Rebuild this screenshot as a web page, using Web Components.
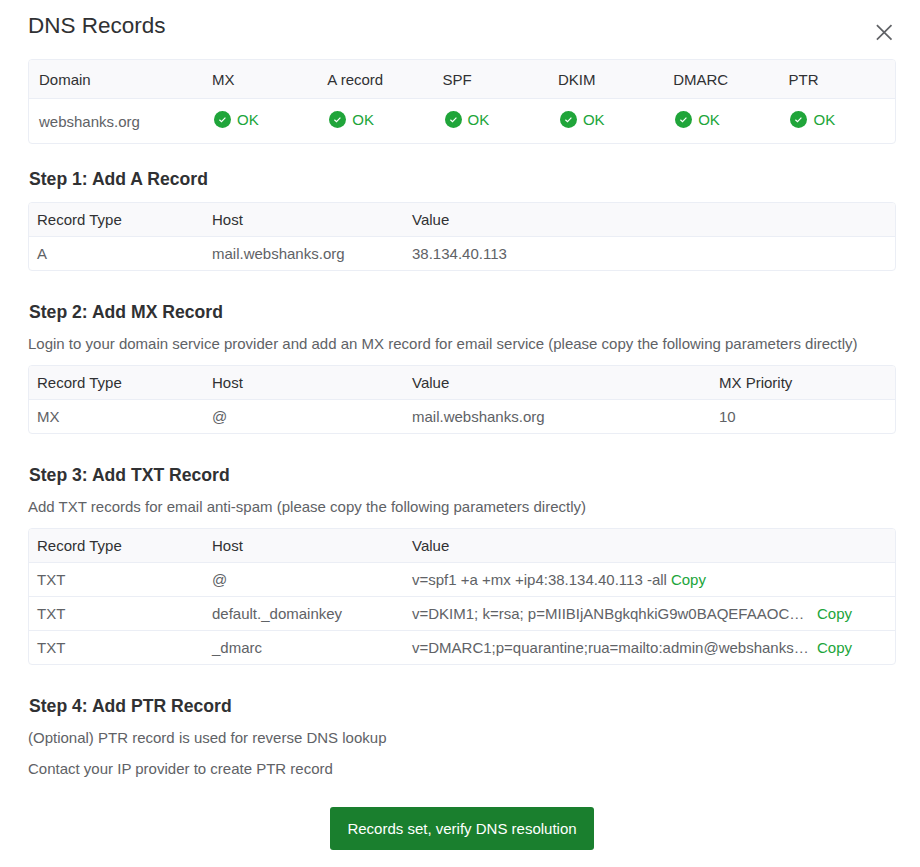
<!DOCTYPE html>
<html>
<head>
<meta charset="utf-8">
<title>DNS Records</title>
<style>
  html, body { margin: 0; background: #fff; }
  body { font-family: "Liberation Sans", Arial, sans-serif; }
  .clip { display: block; width: 396px; white-space: nowrap; }
</style>
</head>
<body>
<template id="dialog-tpl">
  <style>
    :host { display: block; box-sizing: border-box; width: 920px; height: 867px; padding: 11px 24px 0 28px; overflow: hidden; color: #606266; font-size: 15px; }
    header { display: flex; justify-content: space-between; height: 48px; }
    h2 { margin: 0; font-size: 22.5px; line-height: 30px; font-weight: 400; color: #303133; }
    button { all: unset; width: 24px; height: 24px; margin: 9px 0 0 0; color: #606266; }
    svg { display: block; }
  </style>
  <header>
    <h2><slot name="title"></slot></h2>
    <button type="button" aria-label="Close">
      <svg width="24" height="24" viewBox="0 0 24 24" fill="none" stroke="currentColor" stroke-width="1.7"><path d="M4.9 5.1l14.6 14.6M19.5 5.1L4.9 19.7"/></svg>
    </button>
  </header>
  <slot></slot>
</template>

<template id="table-tpl">
  <style>
    :host { display: block; border: 1px solid #ebeef5; border-radius: 4px; overflow: hidden; --pad: 8px; }
    :host([summary]) { --pad: 10px; }
  </style>
  <slot></slot>
</template>

<template id="row-tpl">
  <style>
    :host { display: grid; grid-template-columns: var(--cols); height: 33px; align-items: center; border-top: 1px solid #ebeef5; color: #606266; font-size: 15px; }
    :host(:first-child) { border-top: 0; }
    :host([head]) { background: #f9f9fb; color: #303133; }
  </style>
  <slot></slot>
</template>

<template id="cell-tpl">
  <style>
    :host { display: flex; align-items: center; min-width: 0; padding: 0 var(--pad, 8px); white-space: nowrap; }
  </style>
  <slot></slot>
</template>

<template id="ok-tpl">
  <style>
    :host { display: inline-flex; align-items: center; gap: 6px; color: #20a53a; position: relative; top: -2px; }
    svg { display: block; margin-left: 2px; }
  </style>
  <svg width="17" height="17" viewBox="0 0 17 17"><circle cx="8.5" cy="8.5" r="8.5" fill="#20a53a"/><path d="M5.4 8.8l2.1 1.9 3.9-4" fill="none" stroke="#fff" stroke-width="1.2"/></svg>
  <span>OK</span>
</template>

<template id="copy-tpl">
  <style>
    :host { display: inline-block; color: #20a53a; flex: none; margin-left: 4px; }
    :host([spaced]) { margin-left: 9px; }
  </style>
  <slot>Copy</slot>
</template>

<template id="step-tpl">
  <style>
    :host { display: block; }
    h3 { margin: 0; padding-left: 1px; font-size: 17.6px; line-height: 24px; font-weight: 700; color: #303133; }
    ::slotted(p) { margin: 0; font-size: 15px; line-height: 21px; color: #606266; }
  </style>
  <h3><slot name="heading"></slot></h3>
  <slot></slot>
</template>

<template id="verify-tpl">
  <style>
    :host { display: flex; justify-content: center; }
    button { all: unset; box-sizing: border-box; width: 264px; height: 43px; text-align: center; line-height: 43px; background: #1a7f2e; color: #fff; font-size: 15px; border-radius: 3px; }
  </style>
  <button type="button"><slot></slot></button>
</template>

<dns-dialog>
  <span slot="title">DNS Records</span>

  <dns-table summary style="--cols: 173px repeat(6, 115.3px);">
    <dns-row head style="height:38px"><dns-cell>Domain</dns-cell><dns-cell>MX</dns-cell><dns-cell>A record</dns-cell><dns-cell>SPF</dns-cell><dns-cell>DKIM</dns-cell><dns-cell>DMARC</dns-cell><dns-cell>PTR</dns-cell></dns-row>
    <dns-row style="height:44px"><dns-cell>webshanks.org</dns-cell><dns-cell><dns-ok></dns-ok></dns-cell><dns-cell><dns-ok></dns-ok></dns-cell><dns-cell><dns-ok></dns-ok></dns-cell><dns-cell><dns-ok></dns-ok></dns-cell><dns-cell><dns-ok></dns-ok></dns-cell><dns-cell><dns-ok></dns-ok></dns-cell></dns-row>
  </dns-table>

  <dns-step style="margin-top:23px">
    <span slot="heading">Step 1: Add A Record</span>
    <dns-table style="--cols: 175px 200px 1fr; margin-top:11px">
      <dns-row head><dns-cell>Record Type</dns-cell><dns-cell>Host</dns-cell><dns-cell>Value</dns-cell></dns-row>
      <dns-row><dns-cell>A</dns-cell><dns-cell>mail.webshanks.org</dns-cell><dns-cell>38.134.40.113</dns-cell></dns-row>
    </dns-table>
  </dns-step>

  <dns-step style="margin-top:29px">
    <span slot="heading">Step 2: Add MX Record</span>
    <p style="margin-top:9px">Login to your domain service provider and add an MX record for email service (please copy the following parameters directly)</p>
    <dns-table style="--cols: 175px 200px 307px 1fr; margin-top:11px">
      <dns-row head><dns-cell>Record Type</dns-cell><dns-cell>Host</dns-cell><dns-cell>Value</dns-cell><dns-cell>MX Priority</dns-cell></dns-row>
      <dns-row><dns-cell>MX</dns-cell><dns-cell>@</dns-cell><dns-cell>mail.webshanks.org</dns-cell><dns-cell>10</dns-cell></dns-row>
    </dns-table>
  </dns-step>

  <dns-step style="margin-top:29px">
    <span slot="heading">Step 3: Add TXT Record</span>
    <p style="margin-top:9px">Add TXT records for email anti-spam (please copy the following parameters directly)</p>
    <dns-table style="--cols: 175px 200px 1fr; margin-top:11px">
      <dns-row head><dns-cell>Record Type</dns-cell><dns-cell>Host</dns-cell><dns-cell>Value</dns-cell></dns-row>
      <dns-row><dns-cell>TXT</dns-cell><dns-cell>@</dns-cell><dns-cell>v=spf1 +a +mx +ip4:38.134.40.113 -all<dns-copy></dns-copy></dns-cell></dns-row>
      <dns-row><dns-cell>TXT</dns-cell><dns-cell>default._domainkey</dns-cell><dns-cell><span class="clip">v=DKIM1; k=rsa; p=MIIBIjANBgkqhkiG9w0BAQEFAAOC…</span><dns-copy spaced></dns-copy></dns-cell></dns-row>
      <dns-row><dns-cell>TXT</dns-cell><dns-cell>_dmarc</dns-cell><dns-cell><span class="clip">v=DMARC1;p=quarantine;rua=mailto:admin@webshanks…</span><dns-copy spaced></dns-copy></dns-cell></dns-row>
    </dns-table>
  </dns-step>

  <dns-step style="margin-top:29px">
    <span slot="heading">Step 4: Add PTR Record</span>
    <p style="margin-top:9px">(Optional) PTR record is used for reverse DNS lookup</p>
    <p style="margin-top:10px">Contact your IP provider to create PTR record</p>
  </dns-step>

  <dns-verify style="margin-top:28px">Records set, verify DNS resolution</dns-verify>
</dns-dialog>

<script>
  // every element just clones its template into an open shadow root
  const defs = {
    "dns-dialog": "dialog-tpl",
    "dns-table": "table-tpl",
    "dns-row": "row-tpl",
    "dns-cell": "cell-tpl",
    "dns-ok": "ok-tpl",
    "dns-copy": "copy-tpl",
    "dns-step": "step-tpl",
    "dns-verify": "verify-tpl",
  };
  for (const [name, tpl] of Object.entries(defs)) {
    customElements.define(name, class extends HTMLElement {
      constructor() {
        super();
        this.attachShadow({ mode: "open" });
        this.shadowRoot.appendChild(document.getElementById(tpl).content.cloneNode(true));
      }
    });
  }
</script>
</body>
</html>
